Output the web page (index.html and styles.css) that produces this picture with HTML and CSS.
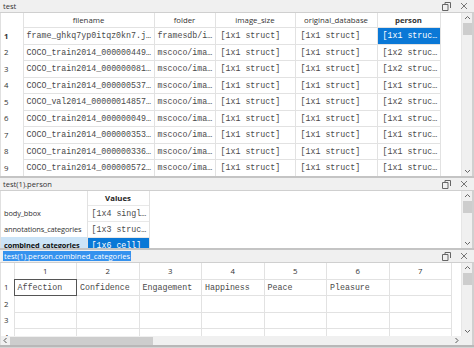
FILE: index.html
```html
<!DOCTYPE html>
<html lang="en">

<head>
    <meta charset="UTF-8">
    <title>Variables</title>
    <link rel="stylesheet" href="styles.css">
</head>

<body>
    <div class="app">
        <!-- 结构体数组 -->
        <section class="panel top">
            <div class="titlebar">
                <span class="title">test</span>
                <span class="tools">
                    <svg class="restore" width="9" height="9" viewBox="0 0 9 9"><path d="M3 .5h5.5V6M3 .5v2M.5 2.5h5.5v6H.5z" fill="none" stroke="#666" stroke-width="1"/></svg>
                    <svg class="close" width="8" height="8" viewBox="0 0 8 8"><path d="M1 1l6 6M7 1L1 7" stroke="#777" stroke-width="1"/></svg>
                </span>
            </div>
            <div class="body">
                <div class="view">
                    <table class="grid vars">
                        <colgroup>
                            <col style="width:22px"><col style="width:131px"><col style="width:61px"><col style="width:80px"><col style="width:82px"><col style="width:63px"><col>
                        </colgroup>
                        <thead>
                            <tr><th class="rn"></th><th>filename</th><th>folder</th><th>image_size</th><th>original_database</th><th class="b">person</th><th class="empty"></th></tr>
                        </thead>
                        <tbody>
                            <tr><td class="rn b">1</td><td>frame_ghkq7yp0itqz0kn7.j…</td><td>framesdb/i…</td><td>[1x1 struct]</td><td>[1x1 struct]</td><td class="sel">[1x1 struc…</td><td class="empty"></td></tr>
                            <tr><td class="rn">2</td><td>COCO_train2014_000000449…</td><td>mscoco/ima…</td><td>[1x1 struct]</td><td>[1x1 struct]</td><td>[1x2 struc…</td><td class="empty"></td></tr>
                            <tr><td class="rn">3</td><td>COCO_train2014_000000081…</td><td>mscoco/ima…</td><td>[1x1 struct]</td><td>[1x1 struct]</td><td>[1x2 struc…</td><td class="empty"></td></tr>
                            <tr><td class="rn">4</td><td>COCO_train2014_000000537…</td><td>mscoco/ima…</td><td>[1x1 struct]</td><td>[1x1 struct]</td><td>[1x1 struc…</td><td class="empty"></td></tr>
                            <tr><td class="rn">5</td><td>COCO_val2014_00000014857…</td><td>mscoco/ima…</td><td>[1x1 struct]</td><td>[1x1 struct]</td><td>[1x2 struc…</td><td class="empty"></td></tr>
                            <tr><td class="rn">6</td><td>COCO_train2014_000000049…</td><td>mscoco/ima…</td><td>[1x1 struct]</td><td>[1x1 struct]</td><td>[1x1 struc…</td><td class="empty"></td></tr>
                            <tr><td class="rn">7</td><td>COCO_train2014_000000353…</td><td>mscoco/ima…</td><td>[1x1 struct]</td><td>[1x1 struct]</td><td>[1x1 struc…</td><td class="empty"></td></tr>
                            <tr><td class="rn">8</td><td>COCO_train2014_000000336…</td><td>mscoco/ima…</td><td>[1x1 struct]</td><td>[1x1 struct]</td><td>[1x1 struc…</td><td class="empty"></td></tr>
                            <tr><td class="rn">9</td><td>COCO_train2014_000000572…</td><td>mscoco/ima…</td><td>[1x1 struct]</td><td>[1x1 struct]</td><td>[1x1 struc…</td><td class="empty"></td></tr>
                        </tbody>
                    </table>
                </div>
                <div class="vscroll">
                    <svg class="arrow" width="7" height="9" viewBox="0 0 7 9"><path d="M1 6l2.5-2.5L6 6" fill="none" stroke="#666" stroke-width="1"/></svg>
                    <span class="thumb"></span>
                    <span class="track"></span>
                    <svg class="arrow" width="7" height="9" viewBox="0 0 7 9"><path d="M1 3l2.5 2.5L6 3" fill="none" stroke="#666" stroke-width="1"/></svg>
                </div>
            </div>
        </section>

        <!-- 单个结构体 -->
        <section class="panel mid">
            <div class="titlebar">
                <span class="title">test(1).person</span>
                <span class="tools">
                    <svg class="restore" width="9" height="9" viewBox="0 0 9 9"><path d="M3 .5h5.5V6M3 .5v2M.5 2.5h5.5v6H.5z" fill="none" stroke="#666" stroke-width="1"/></svg>
                    <svg class="close" width="8" height="8" viewBox="0 0 8 8"><path d="M1 1l6 6M7 1L1 7" stroke="#777" stroke-width="1"/></svg>
                </span>
            </div>
            <div class="body">
                <div class="view">
                    <table class="fields">
                        <colgroup><col style="width:86px"><col style="width:62px"><col></colgroup>
                        <thead><tr><th></th><th class="val">Values</th><th class="empty"></th></tr></thead>
                        <tbody>
                            <tr><td class="name">body_bbox</td><td class="val">[1x4 singl…</td><td class="empty"></td></tr>
                            <tr><td class="name">annotations_categories</td><td class="val">[1x3 struc…</td><td class="empty"></td></tr>
                            <tr><td class="name cur">combined_categories</td><td class="val sel">[1x6 cell]</td><td class="empty"></td></tr>
                        </tbody>
                    </table>
                </div>
                <div class="vscroll">
                    <svg class="arrow" width="7" height="9" viewBox="0 0 7 9"><path d="M1 6l2.5-2.5L6 6" fill="none" stroke="#666" stroke-width="1"/></svg>
                    <span class="thumb"></span>
                    <span class="track"></span>
                    <svg class="arrow" width="7" height="9" viewBox="0 0 7 9"><path d="M1 3l2.5 2.5L6 3" fill="none" stroke="#666" stroke-width="1"/></svg>
                </div>
            </div>
        </section>

        <!-- 元胞数组 -->
        <section class="panel bot">
            <div class="titlebar">
                <span class="title"><span class="hl">test(1).person.combined_categories</span></span>
                <span class="tools">
                    <svg class="restore" width="9" height="9" viewBox="0 0 9 9"><path d="M3 .5h5.5V6M3 .5v2M.5 2.5h5.5v6H.5z" fill="none" stroke="#666" stroke-width="1"/></svg>
                    <svg class="close" width="8" height="8" viewBox="0 0 8 8"><path d="M1 1l6 6M7 1L1 7" stroke="#777" stroke-width="1"/></svg>
                </span>
            </div>
            <div class="body cells">
                <div class="view">
                    <table class="grid cellgrid">
                        <colgroup>
                            <col style="width:13px"><col style="width:62.5px"><col style="width:62.5px"><col style="width:62.5px"><col style="width:62.5px"><col style="width:62.5px"><col style="width:62.5px"><col style="width:62.5px"><col>
                        </colgroup>
                        <thead>
                            <tr><th class="rn"></th><th>1</th><th>2</th><th>3</th><th>4</th><th>5</th><th>6</th><th>7</th><th class="empty"></th></tr>
                        </thead>
                        <tbody>
                            <tr><td class="rn">1</td><td class="focus">Affection</td><td>Confidence</td><td>Engagement</td><td>Happiness</td><td>Peace</td><td>Pleasure</td><td></td><td class="empty"></td></tr>
                            <tr><td class="rn">2</td><td></td><td></td><td></td><td></td><td></td><td></td><td></td><td class="empty"></td></tr>
                            <tr><td class="rn">3</td><td></td><td></td><td></td><td></td><td></td><td></td><td></td><td class="empty"></td></tr>
                            <tr><td class="rn">4</td><td></td><td></td><td></td><td></td><td></td><td></td><td></td><td class="empty"></td></tr>
                        </tbody>
                    </table>
                </div>
                <div class="vscroll">
                    <svg class="arrow" width="7" height="9" viewBox="0 0 7 9"><path d="M1 6l2.5-2.5L6 6" fill="none" stroke="#666" stroke-width="1"/></svg>
                    <span class="thumb"></span>
                    <span class="track"></span>
                    <svg class="arrow" width="7" height="9" viewBox="0 0 7 9"><path d="M1 3l2.5 2.5L6 3" fill="none" stroke="#666" stroke-width="1"/></svg>
                </div>
                <div class="hscroll">
                    <svg class="harrow" width="9" height="7" viewBox="0 0 9 7"><path d="M5.5 1L3 3.5 5.5 6" fill="none" stroke="#555" stroke-width="1"/></svg>
                    <span class="hthumb"></span>
                    <span class="htrack"></span>
                    <svg class="harrow" width="9" height="7" viewBox="0 0 9 7"><path d="M3.5 1L6 3.5 3.5 6" fill="none" stroke="#555" stroke-width="1"/></svg>
                </div>
                <div class="corner"></div>
            </div>
        </section>
    </div>
</body>

</html>
```

FILE: styles.css
```css
* {
    box-sizing: border-box;
}

body {
    margin: 0;
    background: #f0f0f0;
    font-family: "Open Sans", "Noto Sans", sans-serif;
    color: #222;
}

.app {
    width: 474px;
    height: 348px;
    overflow: hidden;
    background: #d4d4d4;
}

.panel {
    overflow: hidden;
    background: #f0f0f0;
}

.panel.top {
    border-bottom: 1px solid #c4c4c4;
}

.panel.mid {
    border-top: 1px solid #c4c4c4;
    border-bottom: 1px solid #c4c4c4;
}

.panel.bot {
    border-top: 1px solid #c4c4c4;
    border-bottom: 2px solid #b8b8b8;
}

/* 各面板内容区高度 */
.top .body {
    height: 163px;
}

.mid .body {
    height: 57px;
}

.bot .body {
    height: 82px;
}

/* 标题栏 */
.titlebar {
    height: 13px;
    display: flex;
    align-items: center;
    justify-content: space-between;
    padding: 0 6px 0 3px;
    border-bottom: 1px solid #cfcfcf;
    background: #f0f0f0;
    font-size: 7.6px;
    line-height: 12px;
}

.title {
    color: #333;
}

.hl {
    background: #3592ee;
    color: #fff;
    padding: 0 1px;
}

.tools {
    display: flex;
    align-items: center;
    gap: 9px;
}

.tools svg {
    display: block;
}

.body {
    display: grid;
    grid-template-columns: minmax(0, 1fr) 11px;
    grid-template-rows: minmax(0, 1fr);
    border-right: 2px solid #d0d0d0;
    border-left: 1px solid #e0e0e0;
}

.view {
    overflow: hidden;
    background: #fff;
}

/* 滚动条 */
.vscroll {
    display: grid;
    grid-template-rows: 9px 13px minmax(0, 1fr) 9px;
    justify-items: center;
    background: #f0f0f0;
    border-left: 1px solid #e6e6e6;
    overflow: hidden;
}

.arrow {
    display: block;
}

.thumb {
    width: 9px;
    height: 12px;
    margin-top: 1px;
    background: #cdcdcd;
}

/* 表格 */
table {
    border-collapse: collapse;
    table-layout: fixed;
    width: 100%;
}

th,
td {
    padding: 0 3px;
    white-space: nowrap;
    overflow: hidden;
}

.grid th {
    height: 14.5px;
    font-weight: normal;
    font-size: 7.8px;
    color: #333;
    text-align: center;
    border-right: 1px solid #e2e2e2;
    border-bottom: 1px solid #e2e2e2;
}

.grid td {
    height: 16.5px;
    font-family: "Liberation Mono", monospace;
    font-size: 8.3px;
    color: #4a4a4a;
    border-right: 1px solid #e2e2e2;
    border-bottom: 1px solid #e2e2e2;
}

.grid .b {
    font-weight: bold;
}

.grid td.rn,
.grid th.rn {
    font-family: "Open Sans", sans-serif;
    font-size: 7.8px;
    color: #333;
    border-bottom: none;
    text-align: left;
    padding-left: 3px;
}

.grid .empty {
    border: none;
}

.vars td:nth-child(n+4) {
    padding-left: 5px;
}

.grid td.sel {
    background: #0a78d6;
    color: #fff;
}

/* 字段列表 */
.fields th {
    height: 14px;
    font-size: 7.8px;
    color: #222;
}

.fields td {
    height: 16px;
}

.fields .val {
    border-left: 1px solid #e2e2e2;
    border-right: 1px solid #e2e2e2;
}

.fields td.val {
    border-top: 1px solid #e8e8e8;
    font-family: "Liberation Mono", monospace;
    font-size: 8.3px;
    color: #4a4a4a;
    padding-left: 4px;
}

.fields .name {
    font-size: 7.4px;
    letter-spacing: -0.12px;
    color: #333;
}

.fields .name.cur {
    background: #cce4f7;
    font-weight: bold;
    color: #111;
}

.fields td.val.sel {
    background: #0a78d6;
    color: #fff;
}

.fields .empty {
    border: none;
}

/* 元胞 */
.body.cells {
    grid-template-rows: minmax(0, 1fr) 9px;
}

.cellgrid th {
    height: 16px;
}

.cellgrid td {
    height: 16.5px;
}

.cellgrid td.focus {
    outline: 1px solid #555;
    outline-offset: -1px;
}

.hscroll {
    display: flex;
    align-items: center;
    background: #f0f0f0;
    overflow: hidden;
}

.harrow {
    display: block;
    flex: none;
}

.hthumb {
    width: 143px;
    height: 8px;
    background: #cdcdcd;
}

.htrack {
    flex: 1;
}

.corner {
    background: #f0f0f0;
}
```
